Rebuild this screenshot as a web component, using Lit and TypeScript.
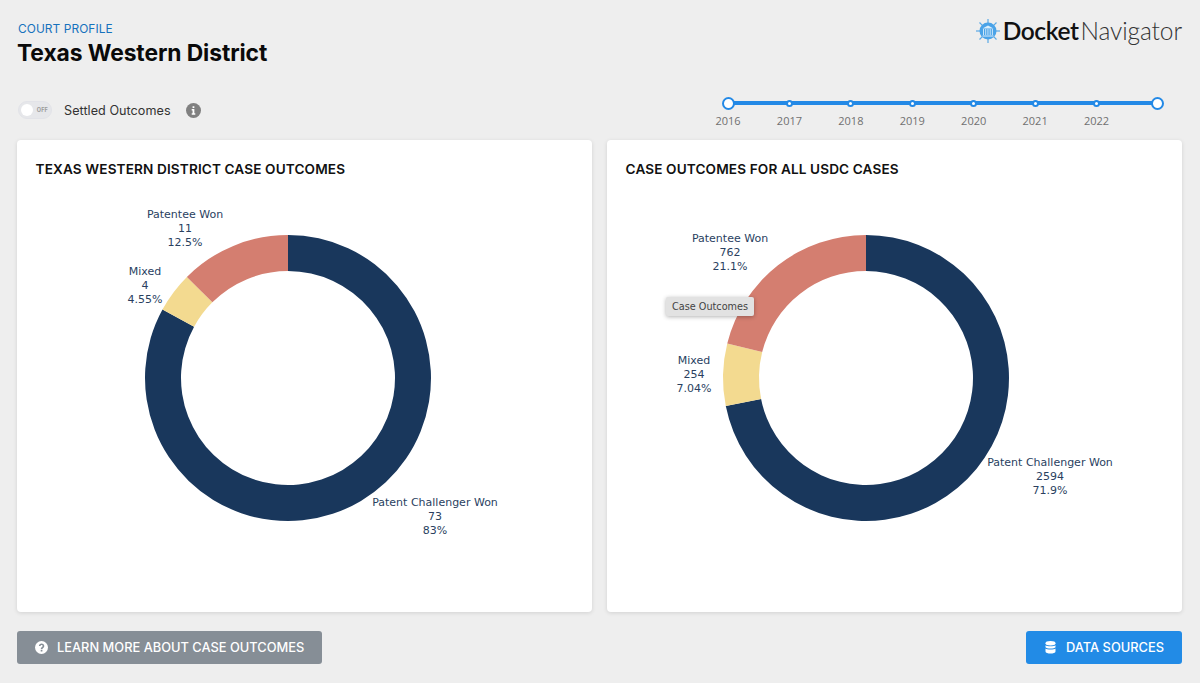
import { LitElement, html, css, svg } from "lit";
import { customElement } from "lit/decorators.js";

interface Label { lines: string[]; x: number; y: number; }
interface Chart { title: string; cx: number; values: number[]; labels: Label[]; }

const COLORS = ["#19375c", "#f3da90", "#d47e70"];

const charts: Chart[] = [
  {
    title: "TEXAS WESTERN DISTRICT CASE OUTCOMES",
    cx: 271,
    values: [73, 4, 11],
    labels: [
      { lines: ["Patent Challenger Won", "73", "83%"], x: 418, y: 366 },
      { lines: ["Mixed", "4", "4.55%"], x: 128, y: 134.5 },
      { lines: ["Patentee Won", "11", "12.5%"], x: 168, y: 78 },
    ],
  },
  {
    title: "CASE OUTCOMES FOR ALL USDC CASES",
    cx: 259,
    values: [2594, 254, 762],
    labels: [
      { lines: ["Patent Challenger Won", "2594", "71.9%"], x: 443, y: 326 },
      { lines: ["Mixed", "254", "7.04%"], x: 87, y: 224 },
      { lines: ["Patentee Won", "762", "21.1%"], x: 123, y: 102 },
    ],
  },
];

function arc(cx: number, cy: number, a0: number, a1: number): string {
  const R = 143, r = 107;
  const p = (rad: number, a: number) => `${(cx + rad * Math.sin(a)).toFixed(2)} ${(cy - rad * Math.cos(a)).toFixed(2)}`;
  const large = a1 - a0 > Math.PI ? 1 : 0;
  return `M${p(R, a0)}A${R} ${R} 0 ${large} 1 ${p(R, a1)}L${p(r, a1)}A${r} ${r} 0 ${large} 0 ${p(r, a0)}Z`;
}

function donut(c: Chart) {
  const total = c.values.reduce((a, b) => a + b, 0);
  let a = 0;
  const cy = 238;
  return svg`<svg class="plot" viewBox="0 0 575 472" width="575" height="472">
    ${c.values.map((v, i) => {
      const a0 = a;
      a += (v / total) * Math.PI * 2;
      return svg`<path d=${arc(c.cx, cy, a0, a)} fill=${COLORS[i]}></path>`;
    })}
    ${c.labels.map((l) =>
      l.lines.map((t, i) => svg`<text class="lbl" x=${l.x} y=${l.y + i * 14.2} text-anchor="middle">${t}</text>`)
    )}
  </svg>`;
}

const YEARS = ["2016", "2017", "2018", "2019", "2020", "2021", "2022"];

@customElement("app-root")
export class AppRoot extends LitElement {
  static styles = css`
    :host {
      display: block;
      width: 1200px;
      height: 683px;
      box-sizing: border-box;
      padding: 21px 18px 0 17px;
      background: #eeeeee;
      font-family: Inter, "Liberation Sans", sans-serif;
      overflow: hidden;
    }
    .head { display: flex; justify-content: space-between; align-items: flex-start; height: 74px; }
    .titles { padding-left: 1px; }
    .eyebrow { font-size: 11.9px; line-height: 15px; color: #1672bd; letter-spacing: 0.08px; }
    h1 { margin: 2px 0 0 -1px; font-size: 22.85px; line-height: 30px; font-weight: 700; color: #0a0a0a; letter-spacing: -0.1px; }
    .logo { display: flex; align-items: center; margin-top: -4px; color: #111; }
    .logo svg { display: block; margin-right: 2px; }
    .logo span { font-family: Lato, sans-serif; font-size: 24.5px; line-height: 28px; }
    .logo .d { font-weight: 600; letter-spacing: -0.4px; }
    .logo .n { font-weight: 300; color: #333; margin-left: 2px; letter-spacing: -0.1px; }
    .controls { display: flex; justify-content: space-between; align-items: flex-start; height: 45px; }
    .left { display: flex; align-items: center; margin-top: 6px; height: 18px; padding-left: 1px; }
    .toggle {
      width: 34px; height: 18px; box-sizing: border-box; border-radius: 9px;
      background: #e6e7ea; border: 1px solid #e2e3e8; position: relative;
      display: flex; align-items: center; justify-content: flex-end; padding-right: 3px;
      font-size: 5.5px; font-weight: 700; color: #9a9a9a; letter-spacing: 0.2px;
    }
    .knob { position: absolute; left: 2px; top: 2px; width: 12px; height: 12px; border-radius: 50%; background: #fff; }
    .set { margin-left: 12px; font-size: 12.6px; color: #333; letter-spacing: 0.05px; }
    .info {
      margin-left: 15px; width: 15px; height: 15px; border-radius: 50%; background: #808080;
      display: flex; align-items: center; justify-content: center;
    }
    .slider { width: 491.4px; margin: 1px -6.7px 0 0; }
    .track { position: relative; height: 14px; }
    .line { position: absolute; left: 30.7px; right: 30.7px; top: 5px; height: 4px; background: #2389e6; }
    .dots, .years { display: grid; grid-template-columns: repeat(8, 61.43px); }
    .dots { position: relative; height: 14px; align-items: center; justify-items: center; }
    .dot { width: 3px; height: 3px; border: 2px solid #2389e6; border-radius: 50%; background: #fff; }
    .dot.big { width: 9px; height: 9px; }
    .years { margin-top: 3px; }
    .years span {
      text-align: center; font-family: "Open Sans", sans-serif; font-size: 11px;
      line-height: 16px; color: #707070;
    }
    .cards { display: grid; grid-template-columns: 575px 575px; gap: 15px; }
    .card {
      position: relative; height: 472px; background: #fff; border-radius: 4px;
      box-shadow: 0 1px 4px rgba(0, 0, 0, 0.12);
    }
    h2 {
      position: absolute; margin: 0; left: 18.6px; top: 20px; font-size: 13.6px; line-height: 18px;
      font-weight: 600; color: #111; letter-spacing: 0.12px;
    }
    .plot { display: block; }
    .lbl { font-family: "DejaVu Sans", Verdana, sans-serif; font-size: 11px; fill: #2a3f5f; }
    .tip {
      position: absolute; left: 59px; top: 157px; width: 88px; box-sizing: border-box; height: 19px; padding-left: 6px; background: #e2e2e2;
      border-radius: 2px; box-shadow: 0 1px 4px rgba(0, 0, 0, 0.3); font-size: 9.7px; line-height: 19px;
      font-family: "DejaVu Sans", sans-serif; color: #444; white-space: nowrap;
    }
    .foot { display: flex; justify-content: space-between; margin-top: 19px; }
    .btn {
      height: 33px; box-sizing: border-box; display: flex; align-items: center; border-radius: 3px;
      color: #fff; font-size: 12.85px; font-weight: 500;
    }
    .btn.grey { width: 305px; background: #868e96; padding-left: 18px; }
    .btn.blue { width: 156px; background: #228be6; padding-left: 19px; }
    .btn svg { display: block; margin-right: 9px; }
    .btn.blue svg { margin-right: 10px; }
  `;

  private logoIcon() {
    const rays = [0, 45, 90, 135, 180, 225, 270, 315];
    return svg`<svg width="26" height="26" viewBox="0 0 26 26">
      ${rays.map((d) => svg`<g transform="rotate(${d} 13 13)">
        <line x1="13" y1="1" x2="13" y2="5" stroke="#5aa9e6" stroke-width="1.2"></line>
      </g>`)}
      <circle cx="13" cy="13" r="8.500" fill="#4aa3e8"></circle>
      <path d="M7.5 10.5 13 7.5l5.500 3z" fill="#dbeefb"></path>
      ${[8.5, 10.7, 12.9, 15.1, 17.3].map((x) => svg`<rect x=${x - 0.4} y="11" width="0.9" height="6" fill="#dbeefb"></rect>`)}
      <rect x="7.500" y="17.500" width="11" height="1" fill="#dbeefb"></rect>
    </svg>`;
  }

  render() {
    return html`
      <div class="head">
        <div class="titles">
          <div class="eyebrow">COURT PROFILE</div>
          <h1>Texas Western District</h1>
        </div>
        <div class="logo">${this.logoIcon()}<span class="d">Docket</span><span class="n">Navigator</span></div>
      </div>
      <div class="controls">
        <div class="left">
          <div class="toggle"><div class="knob"></div>OFF</div>
          <div class="set">Settled Outcomes</div>
          <div class="info">
            <svg width="7" height="9" viewBox="0 0 9 11"><path d="M3.300 0h2.300v2.200H3.300zM2.200 3.600h3.400v5.500h1.200V11H2.200V9.100h1.100V5.500H2.200z" fill="#fff"></path></svg>
          </div>
        </div>
        <div class="slider">
          <div class="track">
            <div class="line"></div>
            <div class="dots">
              <div class="dot big"></div>
              ${[1, 2, 3, 4, 5, 6].map(() => html`<div class="dot"></div>`)}
              <div class="dot big"></div>
            </div>
          </div>
          <div class="years">${YEARS.map((y) => html`<span>${y}</span>`)}</div>
        </div>
      </div>
      <div class="cards">
        ${charts.map(
          (c, i) => html`<div class="card">
            <h2>${c.title}</h2>
            ${donut(c)}
            ${i === 1 ? html`<div class="tip">Case Outcomes</div>` : ""}
          </div>`
        )}
      </div>
      <div class="foot">
        <div class="btn grey">
          <svg width="13" height="13" viewBox="0 0 13 13"><circle cx="6.500" cy="6.500" r="6.500" fill="#fff"></circle><path d="M3.900 5.100C3.900 3.500 5.100 2.500 6.600 2.500s2.700 1 2.700 2.400c0 1.900-1.900 2-1.900 3.300H5.700c0-2.200 1.900-2.300 1.900-3.300 0-.5-.4-.9-1-.9s-1.100.5-1.100 1.100zM5.700 8.900h1.700v1.600H5.700z" fill="#868e96"></path></svg>
          LEARN MORE ABOUT CASE OUTCOMES
        </div>
        <div class="btn blue">
          <svg width="11" height="13" viewBox="0 0 11 13"><ellipse cx="5.500" cy="2.300" rx="5" ry="2.200" fill="#fff"></ellipse><path d="M.5 4.200c1 1.300 9 1.300 10 0v2c-1 1.700-9 1.700-10 0zM.5 7.600c1 1.300 9 1.300 10 0v2.800c0 2.800-10 2.800-10 0z" fill="#fff"></path></svg>
          DATA SOURCES
        </div>
      </div>
    `;
  }
}
